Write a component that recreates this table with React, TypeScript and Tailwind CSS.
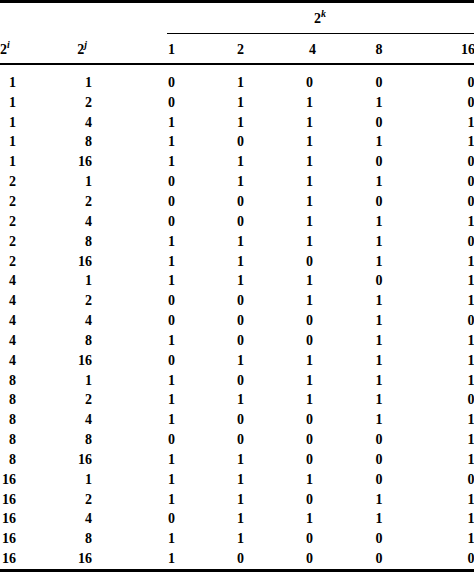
import React from "react";

const rows: [string, string, string[]][] = [
  ["1", "1", ["0", "1", "0", "0", "0"]],
  ["1", "2", ["0", "1", "1", "1", "0"]],
  ["1", "4", ["1", "1", "1", "0", "1"]],
  ["1", "8", ["1", "0", "1", "1", "1"]],
  ["1", "16", ["1", "1", "1", "0", "0"]],
  ["2", "1", ["0", "1", "1", "1", "0"]],
  ["2", "2", ["0", "0", "1", "0", "0"]],
  ["2", "4", ["0", "0", "1", "1", "1"]],
  ["2", "8", ["1", "1", "1", "1", "0"]],
  ["2", "16", ["1", "1", "0", "1", "1"]],
  ["4", "1", ["1", "1", "1", "0", "1"]],
  ["4", "2", ["0", "0", "1", "1", "1"]],
  ["4", "4", ["0", "0", "0", "1", "0"]],
  ["4", "8", ["1", "0", "0", "1", "1"]],
  ["4", "16", ["0", "1", "1", "1", "1"]],
  ["8", "1", ["1", "0", "1", "1", "1"]],
  ["8", "2", ["1", "1", "1", "1", "0"]],
  ["8", "4", ["1", "0", "0", "1", "1"]],
  ["8", "8", ["0", "0", "0", "0", "1"]],
  ["8", "16", ["1", "1", "0", "0", "1"]],
  ["16", "1", ["1", "1", "1", "0", "0"]],
  ["16", "2", ["1", "1", "0", "1", "1"]],
  ["16", "4", ["0", "1", "1", "1", "1"]],
  ["16", "8", ["1", "1", "0", "0", "1"]],
  ["16", "16", ["1", "0", "0", "0", "0"]],
];

const grid = "grid grid-cols-[16px_76px_45px_69px_69px_69px_70px_114px] items-center";

export default function App() {
  return (
    <div
      className="w-[474px] h-[573px] bg-white overflow-hidden text-black font-bold text-[14px] leading-none"
      style={{ fontFamily: '"Liberation Serif", "Times New Roman", serif' }}
    >
      <div className="w-[520px]">
        <div className="h-[3px] bg-black" />
        <div className="h-[30px] flex items-center pt-[2px]">
          <div className="ml-[314px]">
            2<span className="italic text-[10px] relative -top-[6px] font-bold">k</span>
          </div>
        </div>
        <div className="ml-[167px] h-px bg-black" />
        <div className={`${grid} h-[29px] pt-[3px]`}>
          <div className="whitespace-nowrap">
            2<span className="italic text-[10px] relative -top-[6px]">i</span>
          </div>
          <div className="text-right pr-[5px] whitespace-nowrap">
            2<span className="italic text-[10px] relative -top-[6px]">j</span>
          </div>
          <div />
          <div className="text-center">1</div>
          <div className="text-center">2</div>
          <div className="text-center pl-[6px]">4</div>
          <div className="text-center">8</div>
          <div className="text-center pr-[6px]">16</div>
        </div>
        <div className="h-[2px] bg-black" />
        <div className="pt-[8px]">
          {rows.map(([a, b, vals], i) => (
            <div key={i} className={`${grid} h-[19.85px]`}>
              <div className="text-right">{a}</div>
              <div className="text-right">{b}</div>
              <div />
              {vals.map((v, k) => (
                <div key={k} className="text-center">
                  {v}
                </div>
              ))}
            </div>
          ))}
        </div>
        <div className="h-[3px] bg-black" />
      </div>
    </div>
  );
}
